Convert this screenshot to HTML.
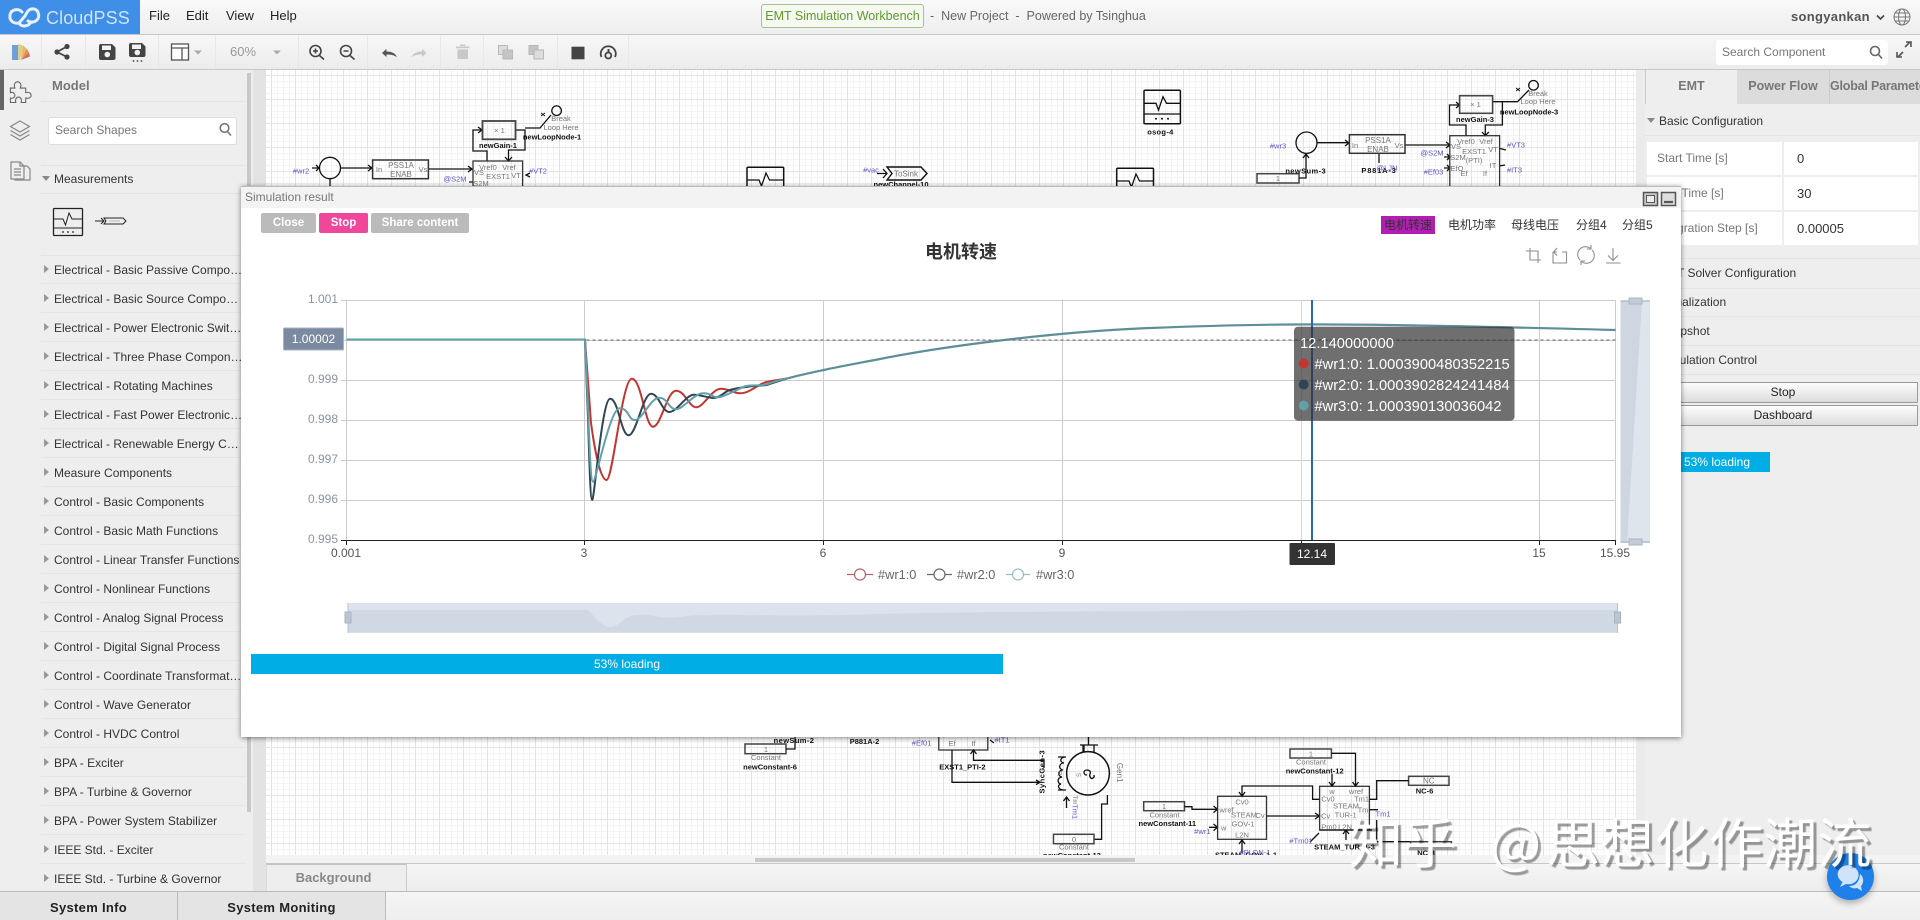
<!DOCTYPE html>
<html lang="en">
<head>
<meta charset="utf-8">
<title>CloudPSS EMT Simulation Workbench</title>
<style>
html,body{margin:0;padding:0;width:1920px;height:920px;overflow:hidden;background:#eee}
body{font-family:"Liberation Sans","Noto Sans CJK SC",sans-serif;font-size:12px;color:#333;position:relative}
.a{position:absolute}
.t{position:absolute;white-space:nowrap;line-height:16px}
svg{position:absolute;overflow:visible}
#hdr{left:0;top:0;width:1920px;height:34px;background:linear-gradient(#f9f9f9,#eee);border-bottom:1px solid #c8c8c8}
#logo{left:0;top:0;width:140px;height:34px;background:#3f8fe9;overflow:hidden}
#tb{left:0;top:35px;width:1920px;height:34px;background:linear-gradient(#f7f7f7,#ececec);border-bottom:1px solid #c8c8c8}
.sep{position:absolute;top:35px;width:1px;height:34px;background:#e8e8e8}
#side{left:0;top:70px;width:253px;height:821px;background:#eee;overflow:hidden}
#strip{left:253px;top:70px;width:13px;height:821px;background:#e3e3e3}
#canvas{left:266px;top:70px;width:1370px;height:785px;background-color:#fff;
background-image:linear-gradient(#e3e3e3 1px,transparent 1px),linear-gradient(90deg,#e3e3e3 1px,transparent 1px),linear-gradient(#f3f3f3 1px,transparent 1px),linear-gradient(90deg,#f3f3f3 1px,transparent 1px);
background-size:24px 24px,24px 24px,6px 6px,6px 6px;background-position:5px 5px,5px 5px,5px 5px,5px 5px}
#gut{left:1636px;top:70px;width:9px;height:793px;background:#ebebeb}
.it{position:absolute;left:41px;width:205px;height:28px;border-bottom:1px solid #e5e5e5;line-height:28px;color:#333}
.it span{position:absolute;left:13px;top:1px;width:189px;overflow:hidden;white-space:nowrap;text-overflow:ellipsis}
.it i{position:absolute;left:3px;top:10px;width:0;height:0;border-left:5px solid #999;border-top:4px solid transparent;border-bottom:4px solid transparent}
.ln{position:absolute;left:41px;width:205px;height:1px;background:#e4e4e4}
#right{left:1645px;top:70px;width:275px;height:793px;background:#eee;overflow:hidden}
.rt{position:absolute;top:0;height:34px;line-height:33px;color:#777;font-size:12.500px;font-weight:bold;text-align:center;overflow:hidden;white-space:nowrap}
.rl{position:absolute;left:0;width:275px;height:1px;background:#e3e3e3}
.rc{position:absolute;background:#fff;height:33px;line-height:33px}
.btn{position:absolute;left:3px;width:268px;height:19px;line-height:19px;text-align:center;border:1px solid #999;background:linear-gradient(#fdfdfd,#dcdcdc);color:#222;border-radius:1px}
.bar{background:#00ade4;color:#fff;text-align:center;position:absolute;height:20px;line-height:20px}
#foot1{left:266px;top:855px;width:1654px;height:8px;background:#f3f3f3;border-bottom:1px solid #c8c8c8}
#foot2{left:266px;top:864px;width:1654px;height:27px;background:linear-gradient(#f5f5f5,#ededed);}
#footl{left:0;top:891px;width:1920px;height:1px;background:#bbb}
#foot3{left:0;top:892px;width:1920px;height:28px;background:linear-gradient(#f5f5f5,#eee)}
.bt{position:absolute;top:892px;height:28px;line-height:31px;background:#e4e4e4;border-right:1px solid #bbb;font-weight:bold;font-size:13px;text-align:center;color:#222;letter-spacing:.3px}
#modal{left:241px;top:186px;width:1440px;height:551px;background:#fff;box-shadow:0 1px 5px rgba(0,0,0,.5);border-top:1px solid #bbb;box-sizing:border-box}
#mh{left:0;top:0;width:1440px;height:21px;background:#f3f3f3}
.mb{position:absolute;top:26px;height:20px;line-height:20px;background:#bbb;color:#fff;font-weight:bold;text-align:center;border-radius:2px;font-size:11.500px}
</style>
</head>
<body>

<!-- Canvas -->
<div class="a" id="strip"></div>
<div class="a" id="canvas"></div>
<div class="a" id="gut"></div>

<svg width="1920" height="855" viewBox="0 0 1920 855" style="left:0;top:0;overflow:hidden;font-family:'Liberation Sans',sans-serif">
 <g fill="none" stroke="#111" stroke-width="1.3">
  <!-- group 1 -->
  <ellipse cx="330" cy="168" rx="10.5" ry="10.7"/>
  <path d="M312 168H319M316 165l3 3l-3 3M340.500 168H372M368 165l4 3l-4 3M428 169H472M468 166l4 3l-4 3M469 182H473M330 186V179"/>
  <path d="M482 130H473V151H487V161M515 130H525V150H508.500V161M505 157l3.500 4l3.500-4M478 127l4 3l-4 3M525 130"/>
  <path d="M525 128H540L551 115M530 173l-4 2l4 2"/>
  <circle cx="556.600" cy="110.700" r="4.800"/>
  <path d="M541 113l4 3M541 116l4-3" stroke-width="1"/>
  <rect x="482.500" y="121" width="33" height="18.300" stroke="#444" stroke-width="1.800"/>
  <rect x="372.600" y="160" width="55.800" height="18.700" stroke="#333" stroke-width="1.500"/>
  <rect x="473" y="161" width="49.600" height="40" stroke="#333"/>
  <!-- group 3 -->
  <ellipse cx="1306.500" cy="142.700" rx="10.500" ry="10.700"/>
  <path d="M1317 142.700H1349M1345 140l4 3l-4 3M1405 145H1450M1446 142l4 3l-4 3M1444 157H1450M1444 168H1450M1447 154l3 3l-3 3M1447 165l3 3l-3 3"/>
  <path d="M1459.500 105H1449.500V125H1466V135.700M1492.600 101.700H1502.400V125H1485.300V135.700M1482 132l3.300 3.700l3.500-3.700M1456 102l3.500 3l-3.500 3"/>
  <path d="M1502 101.700H1517.500L1529 90M1506 150l-6-1.500M1505 165l-6 1M1379 154V163"/>
  <circle cx="1533.500" cy="85.300" r="4.800"/>
  <path d="M1516 88l4 3M1516 91l4-3" stroke-width="1"/>
  <rect x="1459.600" y="95.700" width="33" height="17.600" stroke="#444" stroke-width="1.600"/>
  <rect x="1349.400" y="134.700" width="55.600" height="18.600" stroke="#333" stroke-width="1.500"/>
  <rect x="1449.800" y="135.700" width="49.800" height="52" stroke="#333"/>
  <rect x="1257" y="173.700" width="42" height="9.300" stroke="#444" stroke-width="1.500"/>
  <path d="M1299 178H1306V154M1303 158l3-4l3 4"/>
  <!-- scope 4 -->
  <rect x="1144" y="90.300" width="36.400" height="33.400" rx="1" stroke-width="1.500"/>
  <path d="M1144 103.300H1156L1158.500 110L1163 96.700L1166.500 103.300H1180.400M1144 114H1180.400"/>
  <rect x="747" y="167.300" width="36.700" height="30" rx="1" stroke-width="1.500"/>
  <path d="M747 180H759L761.500 186L766 173L769.500 180H783.700"/>
  <rect x="1116.700" y="168.300" width="36.800" height="30" rx="1" stroke-width="1.500"/>
  <path d="M1116.700 181H1129L1131.500 187L1136 174L1139.500 181H1153.500"/>
  <!-- tosink -->
  <path d="M887 167H921L927 173.500L921 180H887L892 173.500Z" stroke-width="1.400"/>
  <path d="M877 173.500H887M883 169l4 4.500l-4 4.500"/>
  <!-- bottom left -->
  <rect x="745" y="744" width="41" height="9.700" stroke="#444" stroke-width="1.500"/>
  <path d="M786 749H795V737"/>
  <rect x="938.800" y="720" width="49" height="30" stroke="#333"/>
  <path d="M952 750V782.300H1040M973.500 750V760.300H1044V768M970.500 754l3-4l3 4M1036 780l4 2.300l-4 2.300M990 740l4 3"/>
  <ellipse cx="1088" cy="773.300" rx="21.400" ry="21.700" stroke-width="1.500"/>
  <path d="M1083 752V745H1094V752M1088.500 745V730M1080 745H1098M1084 745V752"/>
  <path d="M1066 757c-6 0-7 5-2 6c-5 0-6 6-1 7c-5 0-6 6-1 7c-5 1-5 6-1 7c-4 1-3 5 2 6M1058 757H1066M1058 790H1066"/>
  <path d="M1087 775c-4 0-4-5 0-5c3 0 4 2 3 4s1 6 3 4c2-1 1-2 1-3"/>
  <path d="M1066.500 808V797M1063.500 801l3-4l3 4M1107.400 795V804H1101.600V839.300H1094"/>
  <rect x="1053.500" y="834.300" width="40.500" height="9.400" stroke="#444" stroke-width="1.500"/>
  <!-- gov -->
  <rect x="1143.700" y="801.700" width="40.800" height="9" stroke="#444" stroke-width="1.500"/>
  <path d="M1184.500 806.700H1192V809.300H1217.600M1213.500 806l4 3.300l-4 3.300M1209 827.300H1217.600M1213.500 824l4 3.300l-4 3.300"/>
  <rect x="1217.600" y="796.300" width="48.900" height="43" stroke="#333" stroke-width="1.300"/>
  <path d="M1242 796.300V786H1312.600V799.300H1319.600M1239 792l3 4.300l3-4.300M1242 853V840M1239 844l3-4l3 4M1266.500 816H1319.600M1315 813l4.600 3l-4.600 3"/>
  <!-- turbine -->
  <rect x="1319.600" y="786.300" width="49.800" height="43.700" stroke="#333" stroke-width="1.300"/>
  <rect x="1290" y="749" width="41.400" height="9" stroke="#444" stroke-width="1.500"/>
  <path d="M1331.400 753.300H1355.500V786M1352.500 782l3 4l3-4M1332 774V786M1329 782l3 4l3-4"/>
  <rect x="1408.600" y="776.300" width="40.400" height="9" stroke="#444" stroke-width="1.500"/>
  <path d="M1369.400 799.300H1376.700V780.700H1408.600M1369.400 809.700H1378M1376.700 820V841.700H1410.600"/>
  <rect x="1410.600" y="841.700" width="40.800" height="5.600" stroke="#444" stroke-width="1.500"/>
  <path d="M1310 842l9-9M1346 840V830M1343 834l3-4l3 4M1320 830H1372"/>
 </g>
 <g fill="#111">
  <circle cx="1156" cy="118.700" r="1"/><circle cx="1162" cy="118.700" r="1"/><circle cx="1168" cy="118.700" r="1"/>
 </g>
 <g font-size="7.500" fill="#777" text-anchor="middle">
  <text x="499.500" y="133">× 1</text>
  <text x="401" y="168" font-size="8">PSS1A</text><text x="401" y="177" font-size="8">ENAB</text>
  <text x="379" y="172">In</text><text x="423" y="172">Vs</text>
  <text x="488" y="170">Vref0</text><text x="509" y="170">Vref</text>
  <text x="498" y="179">EXST1</text><text x="479" y="175">VS</text><text x="516" y="178">VT</text><text x="481" y="186">S2M</text>
  <text x="561" y="121">Break</text><text x="561" y="130">Loop Here</text>
  <text x="1475.500" y="107">× 1</text>
  <text x="1378" y="143" font-size="8">PSS1A</text><text x="1378" y="152" font-size="8">ENAB</text>
  <text x="1355" y="148">In</text><text x="1399" y="148">Vs</text>
  <text x="1466" y="144">Vref0</text><text x="1486" y="144">Vref</text>
  <text x="1474" y="154">EXST1</text><text x="1474" y="163">(PTI)</text>
  <text x="1456" y="149">VS</text><text x="1493" y="152">VT</text><text x="1458" y="160">S2M</text>
  <text x="1493" y="168">IT</text><text x="1457" y="171">EfO</text><text x="1464" y="176">Ef</text><text x="1485" y="176">If</text>
  <text x="1538" y="96">Break</text><text x="1538" y="104">Loop Here</text>
  <text x="1278" y="181">1</text>
  <text x="906" y="176.500" font-size="8">ToSink</text>
  <text x="766" y="752">1</text><text x="766" y="760">Constant</text>
  <text x="952" y="746">Ef</text><text x="973.500" y="746">If</text>
  <text x="1074" y="842">0</text><text x="1074" y="849.500">Constant</text>
  <text x="1164" y="809">1</text><text x="1164.500" y="817.500">Constant</text>
  <text x="1242" y="804.500">Cv0</text><text x="1226.500" y="812.500">wref</text><text x="1244" y="817.500">STEAM</text><text x="1260" y="818">Cv</text>
  <text x="1243" y="826.500">GOV-1</text><text x="1223.700" y="830.500">w</text><text x="1242" y="837.500">L2N</text>
  <text x="1332" y="794">w</text><text x="1356" y="794">wref</text><text x="1328" y="801.500">Cv0</text><text x="1361.600" y="801.500">Tm1</text>
  <text x="1346" y="808.500">STEAM</text><text x="1363" y="812.500">Tm</text><text x="1325.700" y="818.500">Cv</text><text x="1345.700" y="817.500">TUR-1</text>
  <text x="1329" y="829.500">Pm0</text><text x="1345" y="829.500">L2N</text>
  <text x="1311" y="756.500">1</text><text x="1311" y="764.500">Constant</text>
  <text x="1428.800" y="783.500" font-size="8">NC</text>
  <text x="1081" y="775" transform="rotate(-90 1081 775)" font-size="6">S</text>
  <text x="1062" y="773" transform="rotate(-90 1062 773)">a</text>
  <text x="1119.600" y="775.500" transform="rotate(90 1119.600 772.700)" font-size="8">Gen1</text>
  <text x="1073" y="800" transform="rotate(90 1073 800)" font-size="6">Tm</text>
 </g>
 <g font-size="7.500" fill="#111" font-weight="bold" text-anchor="middle">
  <text x="498" y="148">newGain-1</text><text x="552" y="139.500">newLoopNode-1</text>
  <text x="1475" y="122">newGain-3</text><text x="1529" y="114.500">newLoopNode-3</text>
  <text x="1305.700" y="173.500" letter-spacing=".4">newSum-3</text><text x="1379" y="173" letter-spacing=".8">P881A-3</text>
  <text x="1160.400" y="134.500" letter-spacing=".3">osog-4</text><text x="901" y="187">newChannel-10</text>
  <text x="794" y="743" letter-spacing=".4">newSum-2</text><text x="864.500" y="744">P881A-2</text>
  <text x="770" y="769.500">newConstant-6</text><text x="962.400" y="769.500">EXST1_PTI-2</text>
  <text x="1167.300" y="826">newConstant-11</text><text x="1314.700" y="773.500">newConstant-12</text>
  <text x="1424.500" y="793.500">NC-6</text><text x="1426" y="855.500">NC-8</text>
  <text x="1344.500" y="849.500">STEAM_TUR_1-3</text>
  <text x="1072" y="858">newConstant-13</text><text x="1246" y="857.500">STEAM_GOV_1-1</text>
  <text x="1041.500" y="774.500" transform="rotate(-90 1041.500 771.700)" letter-spacing=".5">SyncGen-3</text>
 </g>
 <g font-size="7.500" fill="#5a55c8" text-anchor="middle">
  <text x="301" y="173.500">#wr2</text><text x="538" y="173.500">#VT2</text><text x="455" y="181.500">@S2M</text>
  <text x="1278" y="148.500">#wr3</text><text x="1516" y="147.500">#VT3</text><text x="1514.500" y="172.500">#IT3</text>
  <text x="1432" y="155.500">@S2M</text><text x="1433.500" y="174.500">#Ef03</text><text x="1387" y="170.500">@LJN</text>
  <text x="871" y="172.500">#vac</text><text x="921.600" y="745.500">#Ef01</text><text x="1002" y="742.500">#IT1</text>
  <text x="1202.400" y="834">#wr1</text><text x="1383" y="816.500">Tm1</text><text x="1301" y="843.500">#Tm01</text>
  <text x="1074.700" y="814" transform="rotate(90 1074.700 811.700)">Tm1</text>
  <text x="1255" y="855">#PLDN-1</text>
 </g>
</svg>

<!-- Header -->
<div class="a" id="hdr"></div>
<div class="a" id="logo">
 <svg width="140" height="34" style="left:0;top:0" fill="none" stroke="#e6f1fd" stroke-width="3" stroke-linecap="round">
  <path d="M22 12c-3-4-11-3-12 3c-1 6 4 9 9 8l6-7c2-4 4-8 9-7c5 1 6 8 3 11c-2 2-6 3-9 1"/>
  <path d="M31 22c-2 4-9 6-12 1"/>
 </svg>
 <div class="t" style="left:46px;top:10px;font-size:18px;color:#cfe3fa;letter-spacing:.1px">CloudPSS</div>
</div>
<div class="t" style="left:149px;top:8px;font-size:13px;color:#222">File</div>
<div class="t" style="left:186px;top:8px;font-size:13px;color:#222">Edit</div>
<div class="t" style="left:226px;top:8px;font-size:13px;color:#222">View</div>
<div class="t" style="left:270px;top:8px;font-size:13px;color:#222">Help</div>
<div class="a" style="left:761px;top:4px;width:161px;height:22px;border:1px solid #a7c08e;border-radius:3px;background:#f6f8f2;color:#5e9a2c;text-align:center;line-height:23px;font-size:12.500px;white-space:nowrap">EMT Simulation Workbench</div>
<div class="t" style="left:930px;top:8px;font-size:12.500px;color:#666;white-space:pre">-  New Project  -  Powered by Tsinghua</div>
<div class="t" style="left:1791px;top:9px;font-size:13px;color:#555;font-weight:bold;letter-spacing:.3px">songyankan</div>
<svg width="40" height="30" style="left:1875px;top:3px" fill="none" stroke="#777">
 <path d="M0 0l3.500 3.500l3.500-3.500" transform="translate(2 12.500)" stroke="#444" stroke-width="1.600"/>
 <circle cx="27" cy="14" r="8"/><ellipse cx="27" cy="14" rx="3.500" ry="8"/><path d="M19 14H35M20 10H34M20 18H34"/>
</svg>

<!-- Toolbar -->
<div class="a" id="tb"></div>
<div class="sep" style="left:41px"></div><div class="sep" style="left:85px"></div><div class="sep" style="left:158px"></div><div class="sep" style="left:215px"></div><div class="sep" style="left:298px"></div><div class="sep" style="left:367px"></div><div class="sep" style="left:440px"></div><div class="sep" style="left:483px"></div><div class="sep" style="left:557px"></div><div class="sep" style="left:628px"></div>
<svg width="640" height="34" viewBox="0 35 640 34" style="left:0;top:35px">
 <!-- palette -->
 <path d="M12 45h6v15h-6z" fill="#6f9fd8"/><path d="M18 44l5 1.500l-3 14.500h-2z" fill="#d8cf8a"/><path d="M23 45.500l3.500 3l-6 11.500z" fill="#e8b85a"/><path d="M26.500 48.500l2.500 4l-8 7.500z" fill="#e5905a"/><path d="M29 52.500l1 4l-9 3.500z" fill="#cf6b5b"/>
 <!-- share -->
 <g fill="#444"><circle cx="67" cy="46.500" r="2.600"/><circle cx="57" cy="52" r="2.600"/><circle cx="67" cy="57" r="2.600"/></g>
 <path d="M67 46.500L57 52L67 57" fill="none" stroke="#444" stroke-width="1.800"/>
 <!-- save -->
 <path d="M99 46a2 2 0 0 1 2-2h11l3.500 3.500V58a2 2 0 0 1-2 2H101a2 2 0 0 1-2-2z" fill="#444"/>
 <rect x="102" y="45.500" width="9" height="4.500" fill="#f2f2f2"/><circle cx="107.300" cy="54.500" r="2.800" fill="#f2f2f2"/>
 <path d="M129 45a2 2 0 0 1 2-2h11l3.500 3.500V55a2 2 0 0 1-2 2H131a2 2 0 0 1-2-2z" fill="#444"/>
 <rect x="132" y="44.500" width="9" height="4.500" fill="#f2f2f2"/><circle cx="137.300" cy="52.500" r="2.800" fill="#f2f2f2"/>
 <g fill="#444"><circle cx="133.500" cy="61" r=".9"/><circle cx="137.500" cy="61" r=".9"/><circle cx="141.500" cy="61" r=".9"/></g>
 <!-- layout -->
 <rect x="171.500" y="44" width="17" height="16" fill="#fff" stroke="#555" stroke-width="1.300"/><path d="M171.500 48H188.500M182 48V60" stroke="#555" fill="none" stroke-width="1.300"/>
 <path d="M194 50.500h8l-4 4z" fill="#aaa"/>
 <path d="M273 50.500h8l-4 4z" fill="#aaa"/>
 <!-- zoom -->
 <g fill="none" stroke="#444" stroke-width="1.600">
  <circle cx="315.500" cy="51" r="5.500"/><path d="M319.500 55.500L324 59.500M313 51h5M315.500 48.500v5"/>
  <circle cx="346" cy="51" r="5.500"/><path d="M350 55.500L354.500 59.500M343.500 51h5"/>
 </g>
 <!-- undo/redo -->
 <path d="M382 53l4.500-4v2.500c5 0 9 1.500 10.500 6c-2.500-2.500-6-3-10.500-3V57z" fill="#555"/>
 <path d="M426.500 53l-4.500-4v2.500c-5 0-9 1.500-10.500 6c2.500-2.500 6-3 10.500-3V57z" fill="#c8c8c8"/>
 <!-- trash -->
 <path d="M456 46.500h13.400v1.800H456zM460 44.500h5.500v1.500H460zM457.500 49.500h10.500V59h-10.500z" fill="#c8c8c8"/>
 <!-- copy -->
 <g fill="#ccc" stroke="#b8b8b8"><rect x="498.500" y="45.500" width="9" height="9" fill="#ddd"/><rect x="503" y="50" width="9.500" height="9" fill="#c4c4c4"/></g>
 <g fill="#ccc" stroke="#b8b8b8"><rect x="529" y="45.500" width="9" height="9" fill="#c4c4c4"/><rect x="534" y="50" width="9.500" height="9" fill="#ddd"/></g>
 <!-- stop -->
 <rect x="571.500" y="46.700" width="13" height="12.600" fill="#444"/>
 <!-- gauge -->
 <path d="M601.500 57a7.500 7.500 0 1 1 13.500 0" fill="none" stroke="#444" stroke-width="1.800"/><path d="M607.500 49h2v4h-2z" fill="#444"/><circle cx="608.300" cy="55.500" r="3" fill="none" stroke="#444" stroke-width="1.800"/>
</svg>
<div class="t" style="left:230px;top:44px;font-size:13px;color:#999">60%</div>
<div class="a" style="left:1716px;top:40px;width:172px;height:25px;background:#fff;border-radius:3px"></div>
<div class="t" style="left:1722px;top:44px;font-size:12px;color:#777">Search Component</div>
<svg width="210" height="34" style="left:1710px;top:35px" fill="none" stroke="#666" stroke-width="1.600">
 <circle cx="165" cy="16" r="4.500"/><path d="M168.500 19.500L172 23.500"/>
 <path d="M195 12l5-5M196 7h5v5M193 17l-5 5M187 17v5h5" stroke="#555"/>
</svg>

<!-- Sidebar -->
<div class="a" id="side">
 <div class="a" style="left:0;top:0;width:4px;height:40px;background:#666"></div>
 <svg width="41" height="120" style="left:0;top:0" fill="none" stroke="#666" stroke-width="1.200">
  <path d="M11 19h5c-2-5 1-7 3-7s5 2 3 7h6v5c4-1 6 1 6 3s-2 4-6 3v5h-5c1-4-1-6-3-6s-4 2-3 6h-6v-5c3 1 5-1 5-3s-2-4-5-3z" transform="translate(.5 1) scale(.9)"/>
  <path d="M20 51l9.500 5.500L20 62l-9.500-5.500zM10.500 60.500L20 66l9.500-5.500M10.500 64.500L20 70l9.500-5.500" stroke="#888"/>
  <path d="M11 92h9l4 4v13H11zM20 92v4h4M14 99h7M14 102h7M14 105h7M24 96h3l3 3v11H15v-1" stroke="#888"/>
 </svg>
 <div class="t" style="left:52px;top:8px;font-size:13px;font-weight:bold;color:#777">Model</div>
 <div class="ln" style="top:31px"></div>
 <div class="a" style="left:48px;top:47px;width:187px;height:26px;background:#fff;border:1px solid #ddd;border-radius:3px"></div>
 <div class="t" style="left:55px;top:52px;color:#777">Search Shapes</div>
 <svg width="20" height="20" style="left:218px;top:51px" fill="none" stroke="#777" stroke-width="1.600"><circle cx="6.500" cy="7" r="4.300"/><path d="M9.500 10.500L13 14.500"/></svg>
 <div class="ln" style="top:95px"></div>
 <div class="a" style="left:42px;top:106px;width:0;height:0;border-top:5px solid #888;border-left:4px solid transparent;border-right:4px solid transparent"></div>
 <div class="t" style="left:54px;top:101px;color:#333">Measurements</div>
 <div class="ln" style="top:123px"></div>
 <svg width="90" height="32" style="left:52px;top:137px" fill="none" stroke="#222">
  <rect x="1.500" y="1.500" width="29" height="27" rx="1" stroke-width="1.300"/>
  <path d="M1.500 12H11L13.500 18L17 6L20 12H30.500M1.500 21H30.500"/>
  <g fill="#222" stroke="none"><circle cx="11" cy="25" r=".9"/><circle cx="16" cy="25" r=".9"/><circle cx="21" cy="25" r=".9"/></g>
  <path d="M43 14H52M49 11l3 3l-3 3M52 11H71L74 14L71 17H52L54 14Z" stroke-width="1"/>
  <path d="M57 14H68" stroke="#bbb" stroke-width="1"/>
 </svg>
 <div class="ln" style="top:185px"></div>
 <div class="a" style="left:0;top:185px;width:253px;height:640px">
  <div class="it" style="top:0"><i></i><span>Electrical - Basic Passive Components</span></div>
  <div class="it" style="top:29px"><i></i><span>Electrical - Basic Source Components</span></div>
  <div class="it" style="top:58px"><i></i><span>Electrical - Power Electronic Switches</span></div>
  <div class="it" style="top:87px"><i></i><span>Electrical - Three Phase Components</span></div>
  <div class="it" style="top:116px"><i></i><span>Electrical - Rotating Machines</span></div>
  <div class="it" style="top:145px"><i></i><span>Electrical - Fast Power Electronics Models</span></div>
  <div class="it" style="top:174px"><i></i><span>Electrical - Renewable Energy Components</span></div>
  <div class="it" style="top:203px"><i></i><span>Measure Components</span></div>
  <div class="it" style="top:232px"><i></i><span>Control - Basic Components</span></div>
  <div class="it" style="top:261px"><i></i><span>Control - Basic Math Functions</span></div>
  <div class="it" style="top:290px"><i></i><span>Control - Linear Transfer Functions</span></div>
  <div class="it" style="top:319px"><i></i><span>Control - Nonlinear Functions</span></div>
  <div class="it" style="top:348px"><i></i><span>Control - Analog Signal Process</span></div>
  <div class="it" style="top:377px"><i></i><span>Control - Digital Signal Process</span></div>
  <div class="it" style="top:406px"><i></i><span>Control - Coordinate Transformations</span></div>
  <div class="it" style="top:435px"><i></i><span>Control - Wave Generator</span></div>
  <div class="it" style="top:464px"><i></i><span>Control - HVDC Control</span></div>
  <div class="it" style="top:493px"><i></i><span>BPA - Exciter</span></div>
  <div class="it" style="top:522px"><i></i><span>BPA - Turbine &amp; Governor</span></div>
  <div class="it" style="top:551px"><i></i><span>BPA - Power System Stabilizer</span></div>
  <div class="it" style="top:580px"><i></i><span>IEEE Std. - Exciter</span></div>
  <div class="it" style="top:609px"><i></i><span>IEEE Std. - Turbine &amp; Governor</span></div>
 </div>
 <div class="a" style="left:247px;top:3px;width:4px;height:739px;background:#c8c8c8"></div>
</div>

<!-- Right panel -->
<div class="a" id="right">
 <div class="rt" style="left:0;width:92px;background:#eee;border-left:1px solid #ccc;box-sizing:border-box">EMT</div>
 <div class="rt" style="left:92px;width:92px;background:#dcdcdc">Power Flow</div>
 <div class="rt" style="left:184px;width:91px;background:#dcdcdc;border-left:1px solid #ccc;box-sizing:border-box;text-align:left;letter-spacing:-.2px">Global Parameters</div>
 <div class="a" style="left:2px;top:48px;width:0;height:0;border-top:5px solid #888;border-left:4px solid transparent;border-right:4px solid transparent"></div>
 <div class="t" style="left:14px;top:43px">Basic Configuration</div>
 <div class="rl" style="top:65px"></div>
 <div class="rc" style="left:2px;top:72px;width:135px;color:#777;padding-left:10px;box-sizing:border-box">Start Time [s]</div>
 <div class="rc" style="left:139px;top:72px;width:134px;font-size:13px;padding-left:13px;box-sizing:border-box">0</div>
 <div class="rc" style="left:2px;top:107px;width:135px;color:#777;padding-left:10px;box-sizing:border-box">End Time [s]</div>
 <div class="rc" style="left:139px;top:107px;width:134px;font-size:13px;padding-left:13px;box-sizing:border-box">30</div>
 <div class="rc" style="left:2px;top:142px;width:135px;color:#777;padding-left:10px;box-sizing:border-box">Integration Step [s]</div>
 <div class="rc" style="left:139px;top:142px;width:134px;font-size:13px;padding-left:13px;box-sizing:border-box">0.00005</div>
 <div class="rl" style="top:188px"></div>
 <div class="t" style="left:14px;top:195px">EMT Solver Configuration</div>
 <div class="rl" style="top:218px"></div>
 <div class="t" style="left:14px;top:224px">Visualization</div>
 <div class="rl" style="top:246px"></div>
 <div class="t" style="left:14px;top:253px">Snapshot</div>
 <div class="rl" style="top:275px"></div>
 <div class="t" style="left:14px;top:282px">Simulation Control</div>
 <div class="rl" style="top:304px"></div>
 <div class="btn" style="top:312px">Stop</div>
 <div class="btn" style="top:335px">Dashboard</div>
 <div class="bar" style="left:19px;top:382px;width:106px">53% loading</div>
</div>

<!-- Footer -->
<div class="a" id="foot1"></div>
<div class="a" style="left:755px;top:858px;width:380px;height:4px;background:#c8c8c8"></div>
<div class="a" id="foot2"></div>
<div class="a" style="left:266px;top:863px;width:141px;height:28px;background:#eee;border-top:2px solid #c4c4c4;border-right:1px solid #ccc;border-left:1px solid #ddd;box-sizing:border-box;text-align:center;line-height:26px;font-weight:bold;font-size:13px;color:#888;padding-right:6px">Background</div>
<div class="a" id="footl"></div>
<div class="a" id="foot3"></div>
<div class="bt" style="left:0;width:177px">System Info</div>
<div class="bt" style="left:178px;width:207px">System Moniting</div>

<!-- Modal -->
<div class="a" id="modal">
 <div class="a" id="mh"></div>
 <div class="t" style="left:4px;top:2px;color:#777">Simulation result</div>
 <svg width="40" height="18" style="left:1401px;top:4px" fill="none" stroke="#555" stroke-width="1.500">
  <rect x="1.500" y="1.500" width="14" height="13" fill="#ccc"/><rect x="4.500" y="4.500" width="8" height="7" fill="#eee" stroke-width="1"/>
  <rect x="19.500" y="1.500" width="14" height="13" fill="#ddd"/><path d="M22 11H31" stroke-width="2.200"/>
 </svg>
 <div class="mb" style="left:20px;width:55px">Close</div>
 <div class="mb" style="left:78px;width:49px;background:#f0479a">Stop</div>
 <div class="mb" style="left:130px;width:98px">Share content</div>

 <div class="a" style="left:1140px;top:29px;width:54px;height:18px;background:#b01fb0;color:#333;text-align:center;line-height:18px;font-size:12px">电机转速</div>
 <div class="t" style="left:1207px;top:30px;color:#333">电机功率</div>
 <div class="t" style="left:1270px;top:30px;color:#333">母线电压</div>
 <div class="t" style="left:1335px;top:30px;color:#333">分组4</div>
 <div class="t" style="left:1381px;top:30px;color:#333">分组5</div>
 <div class="t" style="left:684px;top:55px;font-size:18px;line-height:20px;font-weight:bold;color:#333">电机转速</div>
</div>

<!-- Chart -->
<svg width="1920" height="920" viewBox="0 0 1920 920" style="left:0;top:0;pointer-events:none;font-family:'Liberation Sans',sans-serif">
 <!-- toolbox -->
 <g fill="none" stroke="#8a8f96" stroke-width="1.100">
  <path d="M1530 248V260H1541M1526 251H1538V263"/>
  <path d="M1553 252H1557M1562 252H1566.500V263H1553V252M1557 248L1553.500 252L1557 255.500"/>
  <path d="M1580 260a7.500 7.500 0 0 1 11-11M1592 250a7.500 7.500 0 0 1-11 11M1591 245v4h-4M1581 265v-4h4"/>
  <path d="M1613 248V260M1608 255.500L1613 260.500L1618 255.500M1606 263H1620.500"/>
 </g>
 <!-- grid -->
 <g stroke="#ccc" fill="none">
  <path d="M346.500 300.500H1615.500M346.500 340.500H1615.500M346.500 380.500H1615.500M346.500 420.500H1615.500M346.500 460.500H1615.500M346.500 500.500H1615.500"/>
  <path d="M346.500 300V540M584.500 300V540M823.500 300V540M1062.500 300V540M1301.500 300V540M1539.500 300V540M1615.500 300V540"/>
  <path d="M341 300.500H346M341 340.500H346M341 380.500H346M341 420.500H346M341 460.500H346M341 500.500H346"/>
 </g>
 <path d="M1301.500 300V540" stroke="#cfe0c8"/>
 <path d="M346.500 340H1615.500" stroke="#666" stroke-dasharray="3 3"/>
 <path d="M341 540.500H1615.500M346.500 540V545M584.500 540V545M823.500 540V545M1062.500 540V545M1301.500 540V545M1539.500 540V545M1615.500 540V545" stroke="#222" fill="none"/>
 <g font-size="12" fill="#8a94a3" text-anchor="end">
  <text x="338" y="303">1.001</text><text x="338" y="383">0.999</text><text x="338" y="423">0.998</text><text x="338" y="463">0.997</text><text x="338" y="503">0.996</text><text x="338" y="543">0.995</text>
 </g>
 <g font-size="12" fill="#555" text-anchor="middle">
  <text x="346" y="557">0.001</text><text x="584" y="557">3</text><text x="823" y="557">6</text><text x="1062" y="557">9</text><text x="1539" y="557">15</text><text x="1615" y="557">15.95</text>
 </g>
 <!-- curves -->
 <g fill="none" stroke-width="2" stroke-linejoin="round">
  <path stroke="#c23531" d="M346.500 339.500H585L591 423C594 445 600 480 606.500 480S622 378.700 631.800 378.700S645 426.700 653 426.700S667 390.700 676 390.700S689 407.300 696.300 407.300S712 388.700 720.800 388.700S733 393.300 740 393.300C750 393.300 758 384 766.500 382C773 380.500 780 379.800 787 378.300"/>
  <path stroke="#2f4554" d="M346.500 339.500H585L587.800 413C589 445 590 500 592.200 500S602 398.700 610.200 398.700S621 435.300 628.600 435.300S643 393.700 651 393.700S662 412 669.400 412S686 394.700 693.900 394.700S707 398 713.500 398C720 398 724 392 729.800 390C736 388 742 387.500 748 386.700C755 385.800 760 385.800 766.500 385C773 383 780 380.500 787 378.700"/>
  <path stroke="#61a0a8" d="M346.500 339.500H585L587 383C589 425 590 481.700 593 481.700S610 408.300 619.600 408.300S628 420 635 420S651 397.700 659.200 397.700S669 409.300 676 409.300S694 393.300 703.300 393.300S711 397.300 717.600 397.300C722 397.300 725 395 729.800 393.300C735 391 740 388 746 386C752 385 757 385.500 762.400 385.300C770 383.500 778 380 787 378.500"/>
  <path stroke="#5d8f98" stroke-width="2.200" d="M787 378.500C800 375 812 372.500 823.700 370C842 366 862 362.500 880 359C940 347 1050 332 1150 328C1200 326 1250 324.400 1312 324.400C1400 324.500 1500 327 1615.600 330"/>
 </g>
 <!-- y pointer -->
 <rect x="283.500" y="328" width="60" height="22" rx="1" fill="#7b8aa0" stroke="#aab3c1"/>
 <text x="313.500" y="343" font-size="12" fill="#fff" text-anchor="middle">1.00002</text>
 <!-- pointer -->
 <path d="M1312 300V540" stroke="#2a65b8" stroke-width="2"/>
 <rect x="1289.500" y="543" width="45.500" height="22" rx="1" fill="#333"/>
 <text x="1312" y="558" font-size="12" fill="#fff" text-anchor="middle">12.14</text>
 <!-- tooltip -->
 <rect x="1294" y="326.700" width="220.500" height="94" rx="4" fill="rgba(50,50,50,.7)"/>
 <g font-size="14.700" fill="#fff">
  <text x="1300" y="348">12.140000000</text>
  <circle cx="1303.700" cy="363.500" r="5" fill="#c23531"/><text x="1314.500" y="369">#wr1:0: 1.0003900480352215</text>
  <circle cx="1303.700" cy="384.500" r="5" fill="#2f4554"/><text x="1314.500" y="390">#wr2:0: 1.0003902824241484</text>
  <circle cx="1303.700" cy="405.500" r="5" fill="#61a0a8"/><text x="1314.500" y="411">#wr3:0: 1.000390130036042</text>
 </g>
 <!-- legend -->
 <g fill="#fff" stroke-width="1.200">
  <path d="M847 574.500H873" stroke="#b4656c"/><circle cx="860" cy="574.500" r="5.500" stroke="#b4656c"/>
  <path d="M927 574.500H952" stroke="#626b72"/><circle cx="939.500" cy="574.500" r="5.500" stroke="#626b72"/>
  <path d="M1006 574.500H1030" stroke="#9bbdc0"/><circle cx="1018" cy="574.500" r="5.500" stroke="#9bbdc0"/>
 </g>
 <g font-size="12.800" fill="#666"><text x="878" y="579">#wr1:0</text><text x="957" y="579">#wr2:0</text><text x="1036" y="579">#wr3:0</text></g>
 <!-- right data zoom -->
 <rect x="1620.500" y="301" width="29.500" height="242" fill="#dfe5ec"/>
 <path d="M1620.500 301H1642L1627 543H1620.500Z" fill="#ced6e1"/>
 <path d="M1620.500 301H1650M1620.500 542H1650" stroke="#b3bdcb" stroke-width="1.500"/>
 <rect x="1629" y="298" width="13" height="6" fill="#c2cbd8" stroke="#a9b4c3"/>
 <rect x="1629" y="539" width="13" height="6" fill="#c2cbd8" stroke="#a9b4c3"/>
 <!-- bottom data zoom -->
 <rect x="348" y="603" width="1269.600" height="29.700" fill="#dde3ec"/>
 <path d="M348 610H588C596 618 602 627 610 627C619 627 624 616 635 615C650 613 665 620 680 617C710 612 760 617 840 615C950 612 1100 610 1617 610V632.700H348Z" fill="#d0d8e3"/>
 <path d="M348 603V633M1617.500 603V633" stroke="#b9c3d0"/>
 <rect x="345" y="612" width="6" height="11" fill="#bcc6d3" stroke="#a9b4c3"/>
 <rect x="1614.500" y="612" width="6" height="11" fill="#bcc6d3" stroke="#a9b4c3"/>
</svg>
<div class="bar" style="left:251px;top:654px;width:752px">53% loading</div>

<!-- Chat FAB -->
<div class="a" style="left:1826.500px;top:853px;width:47px;height:47px;border-radius:50%;background:#1f80ea;box-shadow:0 3px 7px rgba(0,0,0,.3)"></div>
<svg width="47" height="47" style="left:1826.500px;top:853px">
 <path d="M19 31l-6 3l2.500-5C11 26 10 22 11 19c2-6 9-8 14-6c5 2 8 7 6 12c-2 5-7 7-12 6z" fill="#cfe4fb"/>
 <path d="M33 21c4 3 4 9 1 12l1 5l-5-3c-3 1-6 0-8-2c5 0 10-2 11-12z" fill="#cfe4fb"/>
</svg>

<!-- Watermark -->
<div class="t" style="left:1349px;top:808px;font-size:54px;line-height:64px;color:#fff;text-shadow:3px 3px 1px rgba(0,0,0,.38);font-family:'Noto Sans CJK SC',sans-serif;">知乎</div>
<div class="t" style="left:1490px;top:808px;font-size:54px;line-height:64px;color:#fff;text-shadow:3px 3px 1px rgba(0,0,0,.38);font-family:'Noto Sans CJK SC',sans-serif;">@</div>
<div class="t" style="left:1546px;top:808px;font-size:54px;line-height:64px;color:#fff;text-shadow:3px 3px 1px rgba(0,0,0,.38);font-family:'Noto Sans CJK SC',sans-serif;letter-spacing:.3px">思想化作潮流</div>

</body>
</html>
